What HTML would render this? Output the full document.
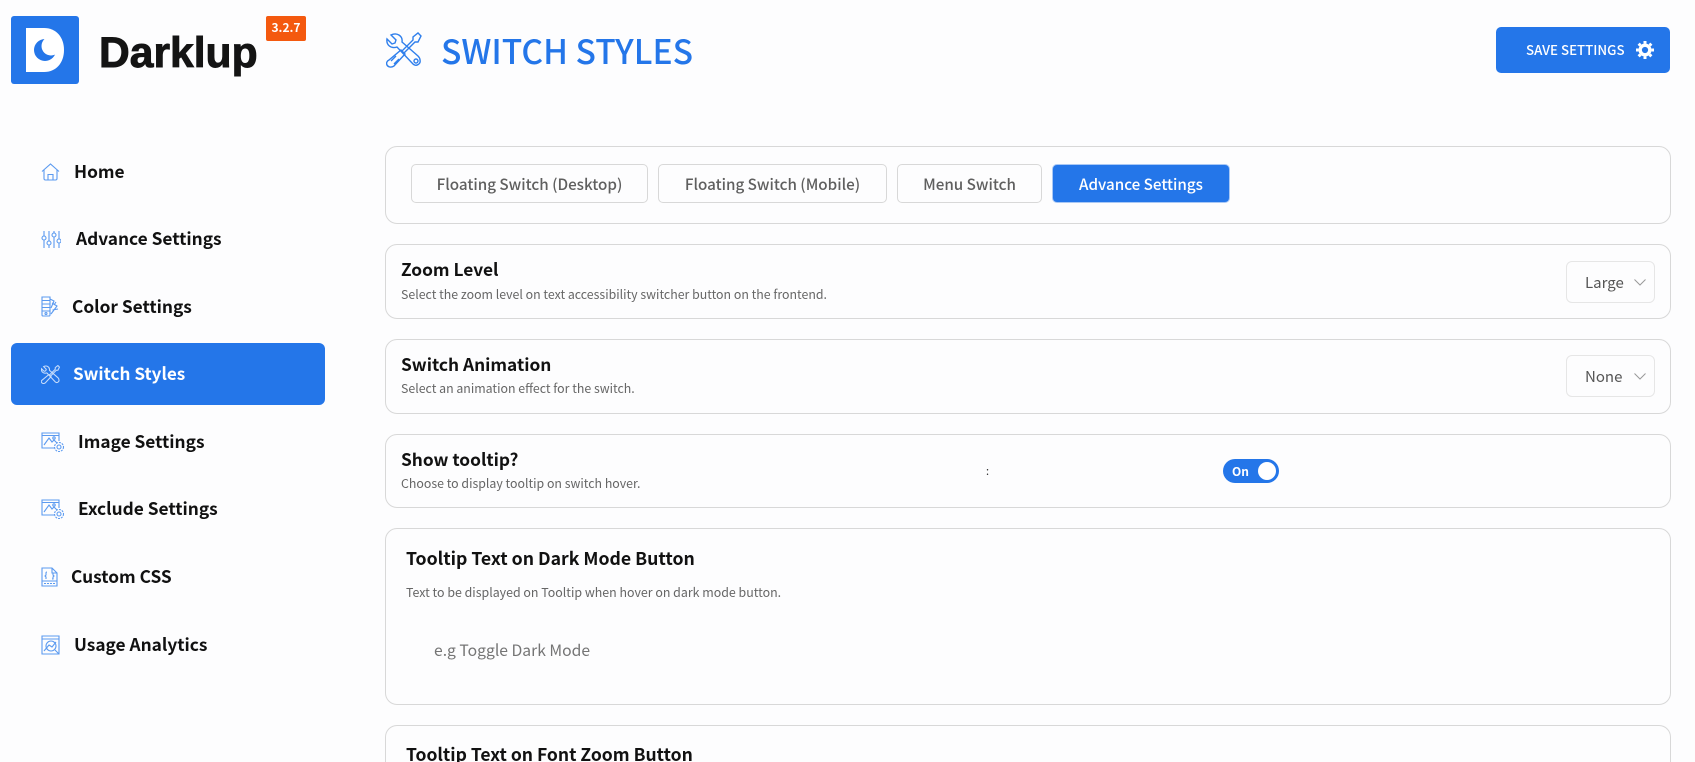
<!DOCTYPE html>
<html lang="en"><head><meta charset="utf-8"><title>Darklup</title>
<style>
html,body{margin:0;padding:0;width:1695px;height:762px;overflow:hidden;background:#fdfdfe}
body{font-family:"Noto Sans CJK JP","Liberation Sans",sans-serif;color:#111}
#w{position:absolute;left:0;top:0;width:1695px;height:762px;overflow:hidden}
.a{position:absolute;white-space:nowrap;line-height:1}
.card{position:absolute;left:385px;width:1284px;border:1px solid #d8d8d8;border-radius:12px;box-sizing:content-box}
.nav{position:absolute;font-size:17.3px;font-weight:700;line-height:24px;white-space:nowrap;color:#111}
.ic{position:absolute;fill:none;stroke:#5b9af0;stroke-width:1.1}
.tab{position:absolute;top:164px;height:37px;line-height:38px;border:1px solid #d8d8d8;border-radius:5px;font-size:15.2px;font-weight:500;color:#5f5f5f;text-align:center;box-sizing:content-box}
.h{position:absolute;font-size:17.3px;font-weight:700;line-height:24px;white-space:nowrap;color:#111}
.d{position:absolute;font-size:12.35px;line-height:18px;white-space:nowrap;color:#666}
.sel{position:absolute;left:1566px;width:87px;height:40px;border:1px solid #e6e6e6;border-radius:6px;font-size:15px;color:#555;line-height:42px}
.sel span{position:absolute;left:18px}
.sel svg{position:absolute;left:67px;top:17px}
</style></head><body><div id="w">

<svg class="a" style="left:11px;top:16px" width="68" height="68" viewBox="0 0 68 68"><rect width="68" height="68" rx="3" fill="#2476e9"/><path d="M15 12H33C45 12 53 21 53 34S45 56 33 56H15Z" fill="#fff"/><circle cx="34" cy="34" r="11" fill="#2476e9"/><circle cx="40" cy="30" r="9.5" fill="#fff"/></svg>
<div class="a" style="left:99px;top:29px;font:700 42.6px/48px 'Liberation Sans',sans-serif;color:#141414;-webkit-text-stroke:.9px #141414">Darklup</div>
<div class="a" style="left:266px;top:16px;width:40px;height:25px;background:#f4590f;border-radius:2px;color:#fff;font-size:12px;font-weight:700;line-height:23px;text-align:center">3.2.7</div>

<svg class="ic" style="left:41px;top:163px" width="19" height="18" viewBox="0 0 19 18"><path d="M1 8.500 9.500 1 18 8.500M3 7V15.500Q3 17 4.500 17H14.500Q16 17 16 15.500V7M7 17V11.500H12V17"/></svg>
<div class="nav" style="left:74px;top:159px">Home</div>

<svg class="ic" style="left:41px;top:230px" width="20" height="19" viewBox="0 0 20 19"><path d="M3 1V6M3 10V18M8 1V11M8 15V18M13 1V3M13 7V18M18 1V9M18 13V18"/><circle cx="3" cy="8" r="2"/><circle cx="8" cy="13" r="2"/><circle cx="13" cy="5" r="2"/><circle cx="18" cy="11" r="2"/></svg>
<div class="nav" style="left:76px;top:226px">Advance Settings</div>

<svg class="ic" style="left:41px;top:296px" width="18" height="21" viewBox="0 0 18 21"><path d="M1 1H9V19Q9 20 8 20H2Q1 20 1 19ZM1 4.500H9M1 8H9M1 11.500H9M1 15H9M9 3 13 5 10 12M11 7 16 10 10 18M13 9 15 6M11.500 14 17 13"/><circle cx="5" cy="17.500" r="1"/></svg>
<div class="nav" style="left:72px;top:294px">Color Settings</div>

<div class="a" style="left:11px;top:343px;width:314px;height:62px;background:#2476e9;border-radius:6px"></div>
<svg class="a" style="left:41px;top:365px;fill:none;stroke:#c6dcfb;stroke-width:2" width="19" height="19" viewBox="0 0 36 36"><path d="M5 3 10 8 9 11 6 12 1 7C0 13 5 17 11 15L27 32C30 35 35 32 34 28 34 26 33 25 32 24L16 10C17 4 11 0 5 3Z"/><path d="M35 4 32 1 27 5V8L16 19 18 21 29 10H32ZM15 18 19 22 8 34C5 36 2 35 1 33 0 31 1 29 3 28Z"/></svg>
<div class="nav" style="left:73px;top:361px;color:#fff;font-size:17.1px">Switch Styles</div>

<svg class="ic" style="left:41px;top:432px" width="24" height="21" viewBox="0 0 24 21"><path d="M13 16H1V1H18V9M1 3.500H18M3 13 8 6 11 10 13 8 16 11"/><circle cx="13" cy="6" r="1.200"/><circle cx="18" cy="15" r="4.500" stroke-dasharray="2 1"/><circle cx="18" cy="15" r="2"/></svg>
<div class="nav" style="left:78px;top:429px">Image Settings</div>

<svg class="ic" style="left:41px;top:499px" width="24" height="21" viewBox="0 0 24 21"><path d="M13 16H1V1H18V9M1 3.500H18M3 13 8 6 11 10 13 8 16 11"/><circle cx="13" cy="6" r="1.200"/><circle cx="18" cy="15" r="4.500" stroke-dasharray="2 1"/><circle cx="18" cy="15" r="2"/></svg>
<div class="nav" style="left:78px;top:496px">Exclude Settings</div>

<svg class="ic" style="left:41px;top:567px" width="17" height="20" viewBox="0 0 17 20"><path d="M1 19V1H11L16 6V19ZM11 1V6H16M1 14H16M6 5Q5 5 5 6V8L4 9 5 10V12M11 6 12 6V8L13 9 12 10V12H11"/><path d="M3 16.500H14" stroke-dasharray="2 1"/></svg>
<div class="nav" style="left:71px;top:564px">Custom CSS</div>

<svg class="ic" style="left:41px;top:635px" width="20" height="20" viewBox="0 0 20 20"><path d="M1 19V1H18V19ZM1 4H18M3 16 8 10 11 12 15 7"/><circle cx="10" cy="11" r="5"/><path d="M14 15 18 19"/></svg>
<div class="nav" style="left:74px;top:632px">Usage Analytics</div>

<svg class="a" style="left:386px;top:32px;fill:none;stroke:#2f7fec;stroke-width:1.400" width="36" height="36" viewBox="0 0 36 36"><path d="M5 3 10 8 9 11 6 12 1 7C0 13 5 17 11 15L27 32C30 35 35 32 34 28 34 26 33 25 32 24L16 10C17 4 11 0 5 3Z"/><circle cx="30" cy="29" r="2"/><path d="M35 4 32 1 27 5V8L16 19 18 21 29 10H32ZM15 18 19 22 8 34C5 36 2 35 1 33 0 31 1 29 3 28ZM5 29 10 24M8 32 13 27"/></svg>
<div class="a" style="left:441px;top:27px;font-size:33.600px;font-weight:500;line-height:46px;color:#2476e9">SWITCH STYLES</div>

<div class="a" style="left:1496px;top:27px;width:174px;height:46px;background:#2476e9;border-radius:5px"></div>
<div class="a" style="left:1526px;top:41px;color:#fff;font-size:13.300px;font-weight:500;line-height:18px">SAVE SETTINGS</div>
<svg class="a" style="left:1636px;top:41px" width="18" height="18" viewBox="0 0 18 18"><circle cx="9" cy="9" r="4.800" fill="none" stroke="#fff" stroke-width="3.400"/><path d="M9 9V0M9 9V18M9 9H0M9 9H18M9 9 2.500 2.500M9 9 15.500 15.500M9 9 15.500 2.500M9 9 2.500 15.500" stroke="#fff" stroke-width="3" stroke-dasharray="0 6.500 2.500 9"/></svg>

<div class="card" style="top:146px;height:76px"></div>
<div class="tab" style="left:411px;width:235px">Floating Switch (Desktop)</div>
<div class="tab" style="left:658px;width:227px">Floating Switch (Mobile)</div>
<div class="tab" style="left:897px;width:143px">Menu Switch</div>
<div class="tab" style="left:1052px;width:176px;background:#2476e9;color:#fff;border-color:#a9c8f5">Advance Settings</div>

<div class="card" style="top:244px;height:73px"></div>
<div class="h" style="left:401px;top:257px">Zoom Level</div>
<div class="d" style="left:401px;top:285px">Select the zoom level on text accessibility switcher button on the frontend.</div>
<div class="sel" style="top:261px"><span>Large</span><svg width="12" height="7" viewBox="0 0 12 7" fill="none" stroke="#999"><path d="M.5.5 6 6 11.500.5"/></svg></div>

<div class="card" style="top:339px;height:73px"></div>
<div class="h" style="left:401px;top:352px">Switch Animation</div>
<div class="d" style="left:401px;top:379px">Select an animation effect for the switch.</div>
<div class="sel" style="top:355px"><span>None</span><svg width="12" height="7" viewBox="0 0 12 7" fill="none" stroke="#999"><path d="M.5.5 6 6 11.500.5"/></svg></div>

<div class="card" style="top:434px;height:72px"></div>
<div class="h" style="left:401px;top:447px">Show tooltip?</div>
<div class="d" style="left:401px;top:474px">Choose to display tooltip on switch hover.</div>
<div class="a" style="left:986px;top:464px;font-size:11px;line-height:14px;color:#333">:</div>
<div class="a" style="left:1223px;top:459px;width:56px;height:24px;border-radius:12px;background:#2476e9"></div>
<div class="a" style="left:1232px;top:464px;color:#fff;font-size:12px;font-weight:700;line-height:15px">On</div>
<div class="a" style="left:1258px;top:462px;width:18px;height:18px;border-radius:50%;background:#fff"></div>

<div class="card" style="top:528px;height:175px"></div>
<div class="h" style="left:406px;top:547px;font-size:17.650px">Tooltip Text on Dark Mode Button</div>
<div class="d" style="left:406px;top:583px;font-size:12.400px">Text to be displayed on Tooltip when hover on dark mode button.</div>
<div class="a" style="left:434px;top:639px;font-size:15.700px;line-height:22px;color:#757575">e.g Toggle Dark Mode</div>

<div class="card" style="top:725px;height:36px;border-bottom:0;border-radius:12px 12px 0 0"></div>
<div class="h" style="left:406px;top:747px;font-size:17.500px;line-height:15px;height:15px">Tooltip Text on Font Zoom Button</div>

</div></body></html>
